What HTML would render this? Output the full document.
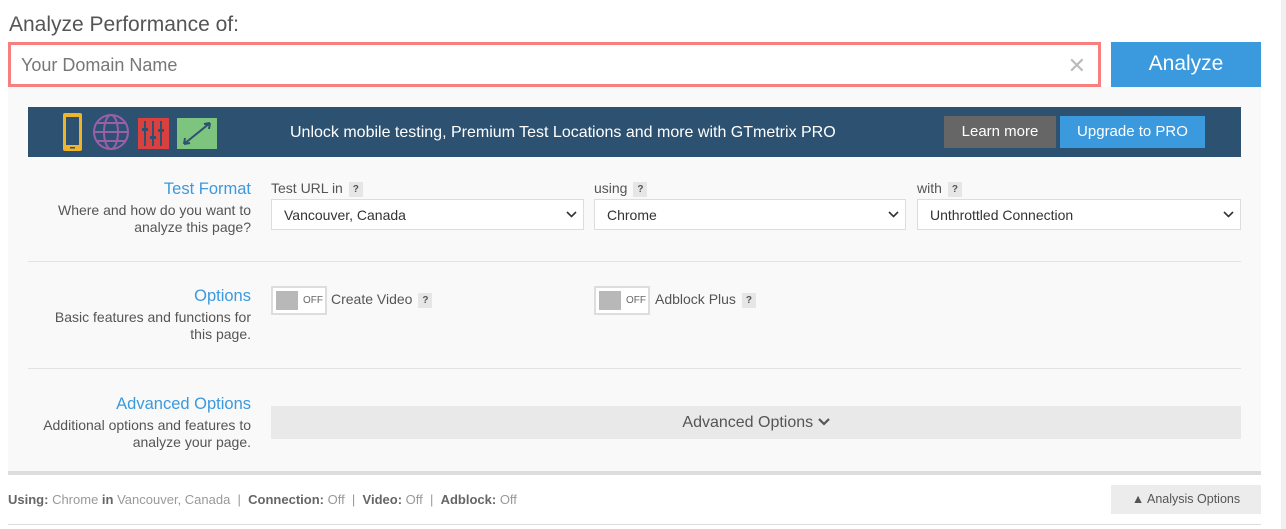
<!DOCTYPE html>
<html><head><meta charset="utf-8"><style>
*{box-sizing:border-box;margin:0;padding:0}
body{width:1286px;height:529px;background:#fff;font-family:"Liberation Sans",sans-serif;color:#555;position:relative;overflow:hidden}
.abs{position:absolute}
.h{left:9px;top:13px;font-size:21px;color:#555}
.inp{left:8px;top:42px;width:1093px;height:45px;border:3px solid #f77f7f;background:#fff}
.inp span{position:absolute;left:10px;top:10px;font-size:18px;color:#777}
.inp b{position:absolute;right:12px;top:8px;font-size:22px;color:#bbb;font-weight:normal}
.btn{left:1111px;top:42px;width:150px;height:45px;background:#3b99dd;color:#fff;font-size:21px;text-align:center;line-height:44px}
.panel{left:8px;top:87px;width:1253px;height:384px;background:#f9f9f9}
.ban{left:28px;top:107px;width:1213px;height:50px;background:#2d5170}
.ban .t{position:absolute;left:262px;top:17px;color:#fff;font-size:16px}
.lm{position:absolute;left:916px;top:9px;width:112px;height:32px;background:#666;color:#fff;font-size:15px;text-align:center;line-height:32px}
.up{position:absolute;left:1032px;top:9px;width:145px;height:32px;background:#3b99dd;color:#fff;font-size:15px;text-align:center;line-height:32px}
.lab{width:243px;text-align:right;left:8px}
.lab .a{color:#3b99dd;font-size:16.5px}
.lab .b{font-size:14px;color:#555;line-height:17px;margin-top:3px}
.sm{font-size:14px;color:#555}
.q{display:inline-block;width:14px;height:15px;background:#e6e6e6;color:#555;font-size:10px;font-weight:bold;text-align:center;line-height:15px;margin-left:6px;vertical-align:1px}
.sel{height:31px;border:1px solid #ddd;background:#fff;font-size:14px;color:#333;padding:7px 12px}
.sel svg{position:absolute;right:6px;top:11px}
.hr{left:28px;width:1213px;height:1px;background:#e3e3e3}
.tg{width:56px;height:29px;border:2px solid #ddd;background:#fff}
.tg s{position:absolute;left:3px;top:3px;width:22px;height:19px;background:#b8b8b8}
.tg u{position:absolute;left:30px;top:7px;font-size:10px;text-decoration:none;color:#666}
.adv{left:271px;top:406px;width:970px;height:33px;background:#e9e9e9;text-align:center;line-height:33px;font-size:16px;color:#555}
.foot{left:8px;top:492px;font-size:13px;color:#999}
.foot b{color:#666}
.ao{left:1111px;top:485px;width:150px;height:29px;background:#ececec;font-size:12.5px;color:#555;text-align:center;line-height:29px}
</style></head><body>
<div class="abs h">Analyze Performance of:</div>
<div class="abs inp"><span>Your Domain Name</span><b>✕</b></div>
<div class="abs btn">Analyze</div>
<div class="abs panel"></div>
<div class="abs" style="left:8px;top:471px;width:1253px;height:4px;background:#ddd"></div>
<div class="abs" style="left:8px;top:524px;width:1253px;height:1px;background:#ddd"></div>
<div class="abs" style="left:1281px;top:0;width:5px;height:529px;background:#f0f0f0"></div>
<div class="abs ban">
 <svg width="200" height="50" style="position:absolute;left:0;top:0">
  <rect x="35" y="6" width="19" height="38" rx="2" fill="#f0b429"/><rect x="38" y="10" width="13" height="28" fill="#2d5170"/><rect x="42" y="40" width="5" height="1.5" fill="#2d5170"/>
  <g fill="none" stroke="#9a5fa8" stroke-width="2"><circle cx="83" cy="25" r="17"/><ellipse cx="83" cy="25" rx="7" ry="17"/><line x1="66" y1="25" x2="100" y2="25"/><path d="M69 16h28M69 34h28"/></g>
  <rect x="110" y="11" width="31" height="31" fill="#d94040"/>
  <g stroke="#2d5170" stroke-width="2"><line x1="117" y1="14" x2="117" y2="39"/><line x1="125" y1="14" x2="125" y2="39"/><line x1="133" y1="14" x2="133" y2="39"/></g>
  <g fill="#2d5170"><rect x="114" y="21" width="6" height="3"/><rect x="122" y="29" width="6" height="3"/><rect x="130" y="22" width="6" height="3"/></g>
  <rect x="149" y="11" width="40" height="31" fill="#7dc57f"/>
  <path d="M156 37L182 16M156 37l1-6M156 37l6-1M182 16l-6 1M182 16l-1 6" stroke="#2d5170" stroke-width="2" fill="none"/>
 </svg>
 <div class="t">Unlock mobile testing, Premium Test Locations and more with GTmetrix PRO</div>
 <div class="lm">Learn more</div><div class="up">Upgrade to PRO</div>
</div>
<div class="abs lab" style="top:180px"><div class="a">Test Format</div><div class="b">Where and how do you want to<br>analyze this page?</div></div>
<div class="abs sm" style="left:271px;top:180px">Test URL in<span class="q">?</span></div>
<div class="abs sm" style="left:594px;top:180px">using<span class="q">?</span></div>
<div class="abs sm" style="left:917px;top:180px">with<span class="q">?</span></div>
<div class="abs sel" style="left:271px;top:199px;width:313px">Vancouver, Canada<svg width="11" height="7"><path d="M1 1l4.5 4.5L10 1" stroke="#333" stroke-width="1.6" fill="none"/></svg></div>
<div class="abs sel" style="left:594px;top:199px;width:312px">Chrome<svg width="11" height="7"><path d="M1 1l4.5 4.5L10 1" stroke="#333" stroke-width="1.6" fill="none"/></svg></div>
<div class="abs sel" style="left:917px;top:199px;width:324px">Unthrottled Connection<svg width="11" height="7"><path d="M1 1l4.5 4.5L10 1" stroke="#333" stroke-width="1.6" fill="none"/></svg></div>
<div class="abs hr" style="top:261px"></div>
<div class="abs lab" style="top:287px"><div class="a">Options</div><div class="b">Basic features and functions for<br>this page.</div></div>
<div class="abs tg" style="left:271px;top:286px"><s></s><u>OFF</u></div>
<div class="abs sm" style="left:331px;top:291px">Create Video<span class="q">?</span></div>
<div class="abs tg" style="left:594px;top:286px"><s></s><u>OFF</u></div>
<div class="abs sm" style="left:655px;top:291px">Adblock Plus<span class="q">?</span></div>
<div class="abs hr" style="top:368px"></div>
<div class="abs lab" style="top:395px"><div class="a">Advanced Options</div><div class="b">Additional options and features to<br>analyze your page.</div></div>
<div class="abs adv">Advanced Options <svg width="12" height="8" style="vertical-align:1px"><path d="M1 1l5 5 5-5" stroke="#555" stroke-width="2.2" fill="none"/></svg></div>
<div class="abs foot"><b>Using:</b> Chrome <b>in</b> Vancouver, Canada &nbsp;|&nbsp; <b>Connection:</b> Off &nbsp;|&nbsp; <b>Video:</b> Off &nbsp;|&nbsp; <b>Adblock:</b> Off</div>
<div class="abs ao">▲ Analysis Options</div>
</body></html>
